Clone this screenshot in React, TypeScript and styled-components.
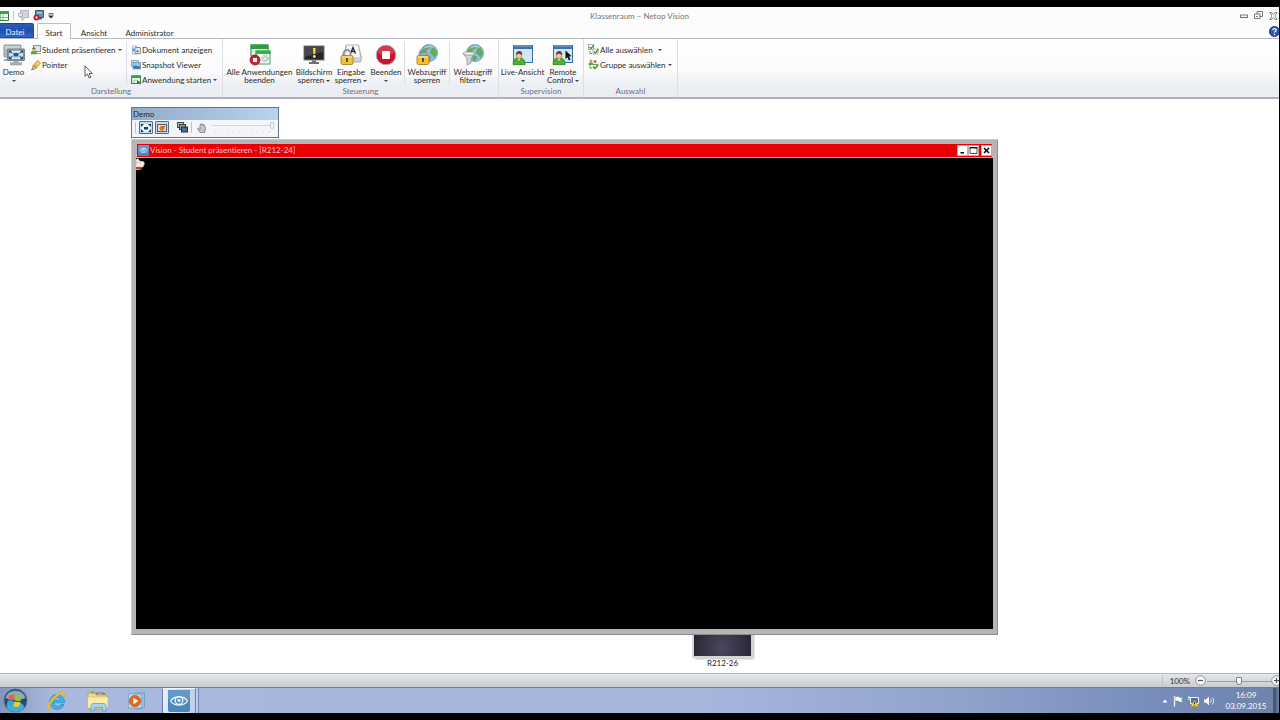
import React from "react";
import styled, { createGlobalStyle, css } from "styled-components";

const Global = createGlobalStyle`
  *, *::before, *::after { box-sizing: border-box; }
  body { margin: 0; background: #000; }
  body, button, input { font-family: Lato, "Open Sans", sans-serif; font-size: 8px; line-height: 8px; color: #2c2c2c; }
  button { margin: 0; padding: 0; border: 0; background: none; white-space: nowrap; }
  svg { display: block; flex: none; }
`;

const Screen = styled.main`
  display: flex;
  flex-direction: column;
  height: 100vh;
  padding: 7px 1px 7px 0;
  background: #000;
  overflow: hidden;
`;

/* ---------- title bar ---------- */

const TitleBar = styled.header`
  display: grid;
  grid-template-columns: 1fr auto 1fr;
  align-items: center;
  height: 17px;
  flex: none;
  background: #fcfcfc;
  overflow: hidden;
`;

const QuickAccess = styled.div`
  display: flex;
  align-items: center;
  gap: 4px;
`;

const Title = styled.h1`
  margin: 0;
  font-size: 8px;
  line-height: 10px;
  font-weight: 400;
  color: #777;
`;

const WindowControls = styled.div`
  display: flex;
  align-items: center;
  justify-self: end;
  gap: 6px;
  width: 39px;
`;

const Rule = styled.span<{ $h: number }>`
  flex: none;
  width: 1px;
  height: ${(p) => p.$h}px;
  background: #bfc2c8;
`;

/* ---------- ribbon ---------- */

const TabRow = styled.nav`
  display: flex;
  align-items: flex-end;
  height: 15px;
  flex: none;
  background: #fcfcfc;
  border-bottom: 1px solid #b4b9c2;
`;

const Tab = styled.button<{ $kind?: "file" | "active"; $w: number }>`
  width: ${(p) => p.$w}px;
  height: 15px;
  padding-top: 4px;
  ${(p) =>
    p.$kind === "file" &&
    css`
      margin-right: 3px;
      padding-top: 2px;
      padding-right: 3px;
      color: #e8f0ff;
      background: linear-gradient(#2a5db8, #1e4fae 50%, #2f6ad0);
      border: 1px solid #1c479c;
      border-left: 0;
      border-radius: 0 2px 0 0;
    `}
  ${(p) =>
    p.$kind === "active" &&
    css`
      height: 16px;
      margin-bottom: -1px;
      padding-top: 2px;
      background: #fff;
      border: 1px solid #b9bec8;
      border-bottom: 0;
      border-radius: 2px 2px 0 0;
    `}
`;

const HelpButton = styled.button`
  align-self: center;
  margin-left: auto;
  width: 10px;
  overflow: hidden;
`;

const Ribbon = styled.section`
  display: flex;
  height: 60px;
  flex: none;
  background: linear-gradient(#fff 0%, #fbfbfc 55%, #edf0f4 75%, #e9ecf1 100%);
  border-bottom: 2px solid #aeb2bb;
`;

const Group = styled.div<{ $w: number }>`
  flex: none;
  width: ${(p) => p.$w}px;
  border-right: 1px solid #dadde3;
`;

const GroupBody = styled.div`
  display: flex;
  height: 48px;
  padding-top: 3px;
`;

const GroupLabel = styled.div`
  text-align: center;
  color: #6c717a;
`;

const Column = styled.div<{ $w: number; $pad?: number }>`
  width: ${(p) => p.$w}px;
  padding-left: ${(p) => p.$pad ?? 0}px;
  flex: none;
`;

const RowButton = styled.button`
  display: flex;
  align-items: center;
  gap: 1px;
  height: 15px;
  padding-left: 2px;
`;

const BigButtonRoot = styled.button<{ $w: number }>`
  display: flex;
  flex-direction: column;
  align-items: center;
  flex: none;
  width: ${(p) => p.$w}px;
  padding-top: 2px;
`;

const BigLabel = styled.span`
  display: block;
  margin-top: 2px;
  text-align: center;
  white-space: pre-line;
`;

const Divider = styled.span`
  flex: none;
  width: 1px;
  height: 42px;
  margin: 0 2px;
  background: #d9dce2;
`;

const Caret = styled.span<{ $gap?: number }>`
  display: inline-block;
  margin-left: ${(p) => p.$gap ?? 2}px;
  vertical-align: middle;
  border: 2px solid transparent;
  border-top-color: #444;
  border-bottom: 0;
`;

/* ---------- classroom area ---------- */

const Workspace = styled.section`
  position: relative;
  flex: 1;
  min-height: 0;
  background: #fff;
`;

const Toolbox = styled.section`
  position: absolute;
  left: 131px;
  top: 8px;
  width: 148px;
  background: #f3f5f8;
  border: 1px solid #5f7590;
`;

const ToolboxTitle = styled.h2`
  margin: 0;
  padding: 0 1px;
  font-size: 8px;
  line-height: 12px;
  font-weight: 400;
  color: #1c2836;
  background: linear-gradient(90deg, #92abc9, #b9d2ee);
`;

const ToolboxRow = styled.div`
  display: flex;
  align-items: center;
  height: 17px;
  padding: 0 0 2px 3px;
  gap: 2px;
`;

const ToolButton = styled.button<{ $on?: boolean; $gap?: number }>`
  display: grid;
  place-items: center;
  width: 14px;
  height: 13px;
  margin-left: ${(p) => p.$gap ?? 0}px;
  border-radius: 1px;
  ${(p) =>
    p.$on &&
    css`
      background: #c5dcf5;
      border: 1px solid #4a6a92;
    `}
`;

const ToolSlider = styled.input`
  appearance: none;
  width: 62px;
  height: 12px;
  margin: 0 0 0 1px;
  background:
    repeating-linear-gradient(90deg, #cfd2d6 0 1px, transparent 1px 6px) 3px 9px / 56px 1px no-repeat,
    linear-gradient(#d4d6da, #d4d6da) 0 3px / 62px 1px no-repeat;
  &::-webkit-slider-thumb {
    appearance: none;
    width: 4px;
    height: 7px;
    margin-top: -4px;
    border: 1px solid #c3c6cb;
    border-radius: 1px 1px 2px 2px;
    background: #f6f7f9;
  }
`;

const StudentTile = styled.figure`
  position: absolute;
  left: 693px;
  bottom: 5px;
  width: 59px;
  margin: 0;
`;

const StudentScreen = styled.div`
  height: 42px;
  border: 1px solid #d2d3d6;
  outline: 1px solid #d8d8da;
  background: radial-gradient(ellipse at 50% 80%, #4a475e, #2b2938 70%, #191820);
  box-shadow: 2px 2px 2px #bbb;
`;

const StudentName = styled.figcaption`
  padding-top: 2px;
  text-align: center;
  line-height: 9px;
  color: #222;
`;

const RemoteWindow = styled.section`
  position: absolute;
  inset: 40px 281px 38px 131px;
  display: flex;
  flex-direction: column;
  padding: 3px 4px 5px 4px;
  background: #b5b5b5;
  border: 1px solid #8d8d8d;
  border-top-color: #c8c8c8;
  border-left-color: #c8c8c8;
`;

const RemoteTitle = styled.header`
  display: flex;
  align-items: center;
  gap: 1px;
  height: 15px;
  flex: none;
  padding: 0 0 1px 1px;
  border: 1px solid #c7b0b0;
  background: #e90005;
  color: #f5c9c9;
`;

const RemoteName = styled.h2`
  flex: 1;
  margin: 0;
  font-size: 8px;
  line-height: 9px;
  font-weight: 400;
`;

const ClassicButton = styled.button<{ $gap?: number }>`
  display: grid;
  place-items: center;
  width: 11px;
  height: 11px;
  margin-left: ${(p) => p.$gap ?? -1}px;
  background: #fff;
  border: 1px solid #c9a9ad;
`;

const RemoteScreen = styled.div`
  flex: 1;
  min-height: 0;
  background: #000;
`;

const Pointer = styled.svg`
  position: absolute;
  left: 84px;
  top: 65px;
`;

/* ---------- status bar and task bar ---------- */

const StatusBar = styled.footer`
  display: flex;
  align-items: center;
  justify-content: flex-end;
  flex: none;
  height: 15px;
  border-top: 1px solid #b5b8be;
  border-bottom: 1px solid #777d88;
  background: linear-gradient(#e6e7ea, #c9ccd2);
  overflow: hidden;
`;

const ZoomValue = styled.label`
  margin: 0 5px 0 7px;
`;

const RoundButton = styled.button`
  flex: none;
  width: 11px;
  height: 11px;
`;

const PlusClip = styled.div`
  width: 8px;
  flex: none;
  overflow: hidden;
`;

const ZoomSlider = styled.input`
  appearance: none;
  width: 64px;
  height: 10px;
  margin: 0 0 0 1px;
  background: linear-gradient(#999ea6, #999ea6) 0 5px / 100% 1px no-repeat;
  &::-webkit-slider-thumb {
    appearance: none;
    width: 6px;
    height: 8px;
    border: 1px solid #7a7f88;
    border-radius: 1px 1px 3px 3px;
    background: #fafafa;
  }
`;

const TaskBar = styled.footer`
  display: flex;
  align-items: center;
  flex: none;
  height: 25px;
  background: linear-gradient(90deg, #8594ba 0, #a9b8dc 4%, #a6b6dd 55%, #91a2cc 75%, #7288b5 94%, #7083a8 100%);
`;

const TaskButton = styled.button<{ $w: number; $active?: boolean }>`
  display: grid;
  place-items: center;
  flex: none;
  width: ${(p) => p.$w}px;
  height: 25px;
  ${(p) =>
    p.$active &&
    css`
      background: linear-gradient(100deg, #e6effa, #bccdea);
      border: 1px solid #6d7ea6;
      border-top-color: #edf3fc;
      border-bottom: 0;
      box-shadow: 2px 0 0 #bfcceb, 3px 0 0 #7585ae;
    `}
`;

const Tray = styled.div`
  display: flex;
  align-items: center;
  gap: 4px;
  margin-left: auto;
`;

const Clock = styled.time`
  width: 54px;
  line-height: 11px;
  text-align: center;
  color: #fff;
`;

const ShowDesktop = styled.button`
  width: 6px;
  height: 25px;
  margin-left: -4px;
  background: linear-gradient(90deg, #3e4d6e, #7585a5);
  border-left: 1px solid #4e5e80;
`;

/* ---------- icons ---------- */

const Svg = ({ s, w, h, vb, children }: { s?: number; w?: number; h?: number; vb: string; children: React.ReactNode }) => (
  <svg width={w ?? s} height={h ?? s} viewBox={vb} aria-hidden="true">
    {children}
  </svg>
);

const DemoIcon = () => (
  <Svg s={22} vb="0 0 22 22">
    <rect x="1" y="1" width="17" height="12" rx=".5" fill="#b3b9c0" stroke="#8d959e" />
    <path d="M2 2h15v3H2z" fill="#ccd1d6" />
    <path d="M1 15h6v2H1z" fill="#a4abb2" />
    <rect x="4.500" y="5" width="17" height="11.500" rx=".5" fill="#8c959f" stroke="#7a838d" />
    <rect x="6" y="6.500" width="14" height="8.500" fill="#c9dff0" />
    <rect x="10.500" y="9" width="5" height="3.500" fill="#1f5b92" />
    <path d="M6 6.500h3l-1 1 1.600 1.500-.7.700-1.600-1.600L6 9.500zM20 6.500h-3l1 1-1.600 1.500.7.700 1.600-1.600L20 9.500zM6 15h3l-1-1 1.600-1.500-.7-.7-1.600 1.600L6 12zM20 15h-3l1-1-1.600-1.500.7-.7 1.600 1.600L20 12z" fill="#1c456b" />
    <path d="M11 17h4v1.500h3.500V21h-11v-2.500H11z" fill="#a9b0b7" stroke="#8b939b" strokeWidth=".5" />
  </Svg>
);

const Person = ({ x = 0, y = 0, k = 1 }: { x?: number; y?: number; k?: number }) => (
  <g transform={`translate(${x} ${y}) scale(${k})`}>
    <path d="M0 13c0-4 1.500-5.500 3-6h5c2 .5 3.500 2 3.500 6z" fill="#4fae32" stroke="#2c7d1d" strokeWidth=".7" />
    <path d="M4 6.500h3.500L5.700 9.500z" fill="#e9f5df" />
    <ellipse cx="5.700" cy="4.200" rx="2.600" ry="3.200" fill="#efc79c" stroke="#8a5a34" strokeWidth=".5" />
    <path d="M2.800 4C2.600 1 4 0 6 0s3 1.500 2.700 3.800C7.500 3.500 6.500 2.500 5.500 2.500S3.500 3 2.800 4z" fill="#6f4523" />
  </g>
);

const StudentIcon = () => (
  <Svg s={10} vb="0 0 10 10">
    <rect x="2.500" y=".5" width="7" height="6" fill="#d8e5ef" stroke="#8296a6" />
    <Person y={2.5} k={0.5} />
    <path d="M6 8.500h4" stroke="#8b959c" />
  </Svg>
);

const PencilIcon = () => (
  <Svg s={10} vb="0 0 10 10">
    <path d="M6.500 .3L9.700 3 5.500 8 2 5.500z" fill="#f6bd2a" stroke="#a97a10" strokeWidth=".5" />
    <path d="M2 5.500L5.500 8 1.200 9.500z" fill="#e6c79a" stroke="#604519" strokeWidth=".5" />
    <path d="M5.300 2l3 2.500" stroke="#fdf0a8" />
    <path d="M0 9.500h3" stroke="#8d7c5b" />
  </Svg>
);

const DocumentIcon = () => (
  <Svg s={10} vb="0 0 10 10">
    <path d="M1.500 1h4l1.500 2v6H1.500z" fill="#f2f5f8" stroke="#91a0ad" strokeWidth=".7" />
    <path d="M4 2.500h5.500v6H4z" fill="#d9e7f3" stroke="#5b7f9f" strokeWidth=".8" />
    <path d="M5 7l1.500-2L8 7z" fill="#347f46" />
    <circle cx="2.500" cy="5" r="1.400" fill="#4b98ca" />
  </Svg>
);

const SnapshotIcon = () => (
  <Svg s={10} vb="0 0 10 10">
    <rect x=".5" y=".5" width="7" height="6" fill="#bfe0f5" stroke="#7293ab" strokeWidth=".7" />
    <rect x="2" y="2.500" width="7.500" height="6.500" fill="#8fcbef" stroke="#6c93b0" strokeWidth=".8" />
    <path d="M2.500 8.500v-2l2-1 2 1 1-.5 1.500.5v2z" fill="#2f6ea3" />
  </Svg>
);

const LaunchIcon = () => (
  <Svg s={10} vb="0 0 10 10">
    <rect x=".5" y="1" width="9" height="7.500" fill="#f3fbf3" stroke="#2d8a3f" />
    <path d="M0 .5h10V3H0z" fill="#31a347" />
    <path d="M1.500 7h3M1.500 5.300h4" stroke="#98cda1" />
    <path d="M6 5l3.500 2.200L6 9.500z" fill="#1d8a33" />
  </Svg>
);

const KillAppsIcon = () => (
  <Svg s={22} vb="0 0 22 22">
    <rect x="2" y="1" width="17" height="11" fill="#e3f2e3" stroke="#2c8c3c" />
    <path d="M1.500 .5h18V5h-18z" fill="#2f9e43" />
    <rect x="7" y="7" width="14" height="13" fill="#f5faf5" stroke="#4fa45b" />
    <path d="M6.500 6.500h15V10h-15z" fill="#3bab4f" />
    <circle cx="16" cy="14.500" r="3" fill="none" stroke="#b9c5bd" strokeWidth="1.800" strokeDasharray="1.500 .9" />
    <circle cx="16" cy="14.500" r="1.700" fill="none" stroke="#b9c5bd" />
    <circle cx="6" cy="16" r="5" fill="#cf1f33" stroke="#9c1022" strokeWidth=".8" />
    <rect x="4" y="14" width="4" height="4" fill="#fff" />
  </Svg>
);

const LockScreenIcon = () => (
  <Svg s={22} vb="0 0 22 22">
    <rect x="1" y="2" width="20" height="14" fill="#262626" stroke="#777b80" />
    <path d="M2 3h18v5L2 13z" fill="#474747" />
    <path d="M10 4h2.600l-.5 6h-1.600z" fill="#ffe14a" />
    <circle cx="11.300" cy="12.500" r="1.400" fill="#ffe14a" />
    <path d="M9 16.500h4v1.500h3v2H6v-2h3z" fill="#6b7075" />
  </Svg>
);

const Padlock = () => (
  <g>
    <path d="M3.500 12V9.500a3.500 3.500 0 0 1 7 0V12" fill="none" stroke="#8e939a" strokeWidth="1.800" />
    <rect x="1" y="11.500" width="12" height="9" rx="1.500" fill="#efc03c" stroke="#a57a15" strokeWidth=".8" />
    <path d="M2 13h10" stroke="#fbe69a" strokeWidth="1.200" />
    <path d="M7 14v4M6 15h1" stroke="#45320a" strokeWidth="1.500" />
  </g>
);

const LockInputIcon = () => (
  <Svg s={22} vb="0 0 22 22">
    <path d="M6 1h12.500l3 13-1 4H5L3.500 14z" fill="#cfd2d6" stroke="#9a9da2" strokeWidth=".8" />
    <path d="M7 1.500h11l1.800 11.500h-14z" fill="#f6f7f8" />
    <path d="M10.500 9.500l2.500-6 2.500 6M11.500 7.500h3" fill="none" stroke="#2c2c2c" strokeWidth="1.400" />
    <Padlock />
  </Svg>
);

const StopIcon = () => (
  <Svg s={22} vb="0 0 22 22">
    <circle cx="11" cy="11" r="9.800" fill="#c8152f" stroke="#b5abad" strokeWidth="1" />
    <path d="M2.500 9a8.600 8.600 0 0 1 17 0c-4 2.500-12 3-17 0z" fill="#d43a50" />
    <rect x="7" y="7" width="8" height="8" rx="1" fill="#fff" />
  </Svg>
);

const Globe = () => (
  <g>
    <circle cx="13" cy="9" r="8.500" fill="#8dbce0" stroke="#5e90b8" strokeWidth=".8" />
    <path d="M7 4c2-2.500 5-3 6-2.500l1 3-3 1-1 3-2 .5-3 1c0-3 1-5 2-6zM16 4l3 .5c1.500 2 2 4 1.500 6l-2 3-2.500-3-2-1 .5-3zM10 11l4 1 1 2-2 3h-2z" fill="#63ab55" />
    <path d="M7 5a8 8 0 0 1 9-3c-3 1-6 2-9 3z" fill="#d9eefb" opacity=".6" />
  </g>
);

const LockWebIcon = () => (
  <Svg s={22} vb="0 0 22 22">
    <Globe />
    <Padlock />
  </Svg>
);

const FilterWebIcon = () => (
  <Svg s={22} vb="0 0 22 22">
    <Globe />
    <path d="M1 9.500h12L9 14.500V19l-4 2v-6.500z" fill="#d4d7da" stroke="#888d93" strokeWidth=".8" />
    <ellipse cx="7" cy="9.500" rx="6" ry="1.600" fill="#f5f6f7" stroke="#888d93" strokeWidth=".8" />
  </Svg>
);

const ScreenIcon = ({ arrow }: { arrow?: boolean }) => (
  <Svg s={22} vb="0 0 22 22">
    <rect x="1.500" y="1.500" width="19" height="17" fill="#d3e6f7" stroke="#3a6ca8" />
    <path d="M1 1h20v4H1z" fill="#3a6fb4" />
    <path d="M2 2h18" stroke="#82aadb" />
    <Person x={1} y={7} k={1.05} />
    {arrow && <path d="M13.500 6.500v8.500l2-1.800 1.400 3.200 1.600-.8-1.400-3 2.600-.3z" fill="#111" />}
  </Svg>
);

const SelectAllIcon = () => (
  <Svg s={11} vb="0 0 11 11">
    <rect x=".5" y=".5" width="5" height="5" fill="#fff" stroke="#7c9b7c" strokeWidth=".7" />
    <path d="M1.500 3l1.500 1.500L6 1M6 7.500l1.500 1.500L10.500 5" fill="none" stroke="#3b9a2e" strokeWidth="1.300" />
    <rect x="5" y="5" width="5" height="5" fill="none" stroke="#7c9b7c" strokeWidth=".7" />
    <path d="M2 7v2.500h2" fill="none" stroke="#5b8f50" />
  </Svg>
);

const SelectGroupIcon = () => (
  <Svg s={11} vb="0 0 11 11">
    <circle cx="3" cy="2" r="1.500" fill="#c79b69" />
    <circle cx="7" cy="2.500" r="1.500" fill="#a97a4a" />
    <path d="M.5 6c0-2 1-2.500 2.500-2.500S5 4 5.500 5 9 3.500 9.500 6z" fill="#4fa339" />
    <path d="M2 6.500V9h2" fill="none" stroke="#5b8f50" />
    <path d="M5 7.500l2 2L10.500 5.500" fill="none" stroke="#358f28" strokeWidth="1.500" />
  </Svg>
);

const EyeMark = ({ size }: { size: number }) => (
  <Svg s={size} vb="0 0 22 22">
    <rect width="22" height="22" rx="2" fill="#4d87be" />
    <path d="M0 0h22v9C15 12 6 12 0 9z" fill="#6498ca" />
    <path d="M2.500 11C6 5.500 16 5.500 19.500 11 16 16.500 6 16.500 2.500 11z" fill="none" stroke="#e9f3fb" strokeWidth="1.300" />
    <circle cx="11" cy="10.500" r="3.800" fill="none" stroke="#e9f3fb" strokeWidth="1.300" />
    <circle cx="11" cy="10.500" r="1.500" fill="#e9f3fb" />
  </Svg>
);

const GridIcon = () => (
  <Svg w={9} h={10} vb="0 0 9 10">
    <path d="M0 .5h8.500v9H0z" fill="#fff" stroke="#27853b" />
    <path d="M0 0h9v3H0z" fill="#39a04f" />
    <path d="M0 6.500h8M3 3v6" stroke="#83bd8d" />
  </Svg>
);

const BubbleIcon = ({ stop }: { stop?: boolean }) => (
  <Svg s={11} vb="0 0 11 11">
    {stop ? (
      <>
        <path d="M2.500 .5h8v7h-8z" fill="#5f93c5" stroke="#42566d" />
        <path d="M4 2h5v1.500H4z" fill="#a9d299" />
        <path d="M6 8h3v1.500H6z" fill="#58616a" />
        <circle cx="3.500" cy="7.500" r="3" fill="#c3152c" />
        <path d="M2.500 6.500h2v2h-2z" fill="#fff" />
      </>
    ) : (
      <>
        <path d="M2.500 .5h8v7H7l-3 3v-3H2.500z" fill="#d0d4db" stroke="#a3a9b5" strokeWidth=".8" />
        <path d="M.5 3h4v3.500h-4z" fill="#e1e4e8" stroke="#a3a9b5" strokeWidth=".7" />
      </>
    )}
  </Svg>
);

const HelpIcon = () => (
  <Svg s={11} vb="0 0 11 11">
    <circle cx="5.500" cy="5.500" r="5" fill="#2b59a9" stroke="#16387a" />
    <path d="M3.800 4.200c0-2.300 3.600-2.200 3.400 0C7.100 5.200 5.500 5.300 5.500 6.500M5.500 7.700v1.200" fill="none" stroke="#fff" strokeWidth="1.200" />
  </Svg>
);

const CircleSign = ({ plus }: { plus?: boolean }) => (
  <Svg s={11} vb="0 0 11 11">
    <circle cx="5.500" cy="5.500" r="4.800" fill="#f7f7f8" stroke="#777c84" strokeWidth=".8" />
    <path d={plus ? "M3 5.500h5M5.500 3v5" : "M3 5.500h5"} stroke="#4c5158" strokeWidth="1.200" />
  </Svg>
);

const WindowsOrb = () => (
  <Svg s={25} vb="0 0 25 25">
    <circle cx="12.500" cy="12.500" r="11.500" fill="#1e4d78" stroke="#56718c" />
    <ellipse cx="12.500" cy="19" rx="8.500" ry="5" fill="#3eb0d0" />
    <path d="M2.500 10a10.500 10.500 0 0 1 20 0c-5 2-15 2-20 0z" fill="#93a9b9" />
    <path d="M6 7.500c2-1.300 4-1.300 6-.2l-1.200 5c-2-1-4-1-6 .1z" fill="#ef6530" />
    <path d="M13 7.700c2 1 4 1 6 0l-1.200 4.800c-2 1-4 1-6 0z" fill="#8dc63f" />
    <path d="M4.600 13.200c2-1.100 4-1.100 6-.1l-1.200 4.900c-2-1-4-1-6 .2z" fill="#3fa0e5" />
    <path d="M11.500 13.400c2 1 4 1 6 0L16.200 18c-2 1.200-4 1.200-6 .1z" fill="#fbc928" />
  </Svg>
);

const BrowserIcon = () => (
  <Svg s={22} vb="0 0 22 22">
    <path d="M18.500 12.800H7.600a4 4 0 0 0 7.300 1.700h3.200A7.500 7.500 0 1 1 18.500 12.800zM7.700 10h7a3.600 3.600 0 0 0-7 0z" fill="#3eb1e7" stroke="#2584bf" strokeWidth=".6" fillRule="evenodd" />
    <path d="M3 19.500C-1 21 2 12 8 6.500S20 0 19 4.500c0 .7-.3 1.300-.6 1.800C19 3 15 3 10 7.500S2.500 17.500 4.500 18.800z" fill="#f0c534" stroke="#c99c1b" strokeWidth=".4" />
  </Svg>
);

const FolderIcon = () => (
  <Svg w={24} h={22} vb="0 0 24 22">
    <path d="M2 3h7l1 2h11v14H2z" fill="#efd98a" stroke="#b59c4b" strokeWidth=".8" />
    <path d="M5 2.500h4M12 3h6" stroke="#7ca356" strokeWidth="1.400" />
    <path d="M10 3.500h2M17 4h2" stroke="#c25a3e" strokeWidth="1.500" />
    <path d="M1.500 7h20.500v11H1.500z" fill="#f8ecaa" stroke="#cdb766" strokeWidth=".6" />
    <path d="M5 21v-5c0-1.500 1-2.500 2.500-2.500h10c1.500 0 2.500 1 2.500 2.500v5h-3.500v-3.500h-8V21z" fill="#a4d4ee" stroke="#5798bf" strokeWidth=".7" />
  </Svg>
);

const PlayerIcon = () => (
  <Svg s={20} vb="0 0 20 20">
    <path d="M8 2h9.500v14l-4 2H8z" fill="#8fc1e3" stroke="#5f93ba" strokeWidth=".7" />
    <path d="M1.500 3h13v14h-13z" fill="#b9d9ee" stroke="#6d9dbd" strokeWidth=".7" />
    <circle cx="8" cy="10" r="5.600" fill="#e8651b" stroke="#b84a0d" strokeWidth=".6" />
    <path d="M6.300 6.800l5 3.200-5 3.200z" fill="#fff" />
  </Svg>
);

/* ---------- composed parts ---------- */

function BigButton({ w, icon, label, caret, below }: { w: number; icon: React.ReactNode; label: string; caret?: boolean; below?: boolean }) {
  return (
    <BigButtonRoot $w={w}>
      {icon}
      <BigLabel>
        {label}
        {below && <br />}
        {caret && <Caret $gap={below ? 0 : 2} />}
      </BigLabel>
    </BigButtonRoot>
  );
}

function SmallButton({ icon, label, caret }: { icon: React.ReactNode; label: string; caret?: number }) {
  return (
    <RowButton>
      {icon}
      <span>{label}</span>
      {caret !== undefined && <Caret $gap={caret} />}
    </RowButton>
  );
}

export default function App() {
  return (
    <Screen>
      <Global />
      <TitleBar>
        <QuickAccess>
          <button aria-label="Klassenraum"><GridIcon /></button>
          <Rule $h={9} />
          <button aria-label="Nachricht"><BubbleIcon /></button>
          <button aria-label="Demo beenden"><BubbleIcon stop /></button>
          <button aria-label="Anpassen">
            <Svg w={6} h={6} vb="0 0 6 6"><path d="M.5 .8h5" stroke="#333" /><path d="M0 2.500h6L3 5.500z" fill="#333" /></Svg>
          </button>
        </QuickAccess>
        <Title>Klassenraum – Netop Vision</Title>
        <WindowControls>
          <button aria-label="Minimieren">
            <Svg w={8} h={8} vb="0 0 8 8"><rect x=".5" y="3" width="7" height="2.500" fill="#fff" stroke="#777" /></Svg>
          </button>
          <button aria-label="Wiederherstellen">
            <Svg w={9} h={9} vb="0 0 9 9"><path d="M3 .5h5.500v5H3z" fill="#fff" stroke="#777" /><path d="M.5 3h5.500v4.500H.5z" fill="#fff" stroke="#777" /><path d="M2 5.500h2" stroke="#777" /></Svg>
          </button>
          <button aria-label="Schließen">
            <Svg w={9} h={8} vb="0 0 9 8"><path d="M1 .5h2L4.500 2.500 6 .5h2L6 4l2 3.500H6L4.500 5.500 3 7.500H1L3 4z" fill="#fff" stroke="#777" strokeWidth=".9" /></Svg>
          </button>
        </WindowControls>
      </TitleBar>

      <TabRow>
        <Tab $kind="file" $w={34}>Datei</Tab>
        <Tab $kind="active" $w={34}>Start</Tab>
        <Tab $w={46}>Ansicht</Tab>
        <Tab $w={65}>Administrator</Tab>
        <HelpButton aria-label="Hilfe"><HelpIcon /></HelpButton>
      </TabRow>

      <Ribbon>
        <Group $w={223}>
          <GroupBody>
            <BigButton w={27} icon={<DemoIcon />} label="Demo" caret below />
            <Column $w={97} $pad={2}>
              <SmallButton icon={<StudentIcon />} label="Student präsentieren" caret={1} />
              <SmallButton icon={<PencilIcon />} label="Pointer" />
            </Column>
            <Divider />
            <Column $w={92}>
              <SmallButton icon={<DocumentIcon />} label="Dokument anzeigen" />
              <SmallButton icon={<SnapshotIcon />} label="Snapshot Viewer" />
              <SmallButton icon={<LaunchIcon />} label="Anwendung starten" caret={1} />
            </Column>
          </GroupBody>
          <GroupLabel>Darstellung</GroupLabel>
        </Group>
        <Group $w={276}>
          <GroupBody>
            <BigButton w={73} icon={<KillAppsIcon />} label={"Alle Anwendungen\nbeenden"} />
            <BigButton w={36} icon={<LockScreenIcon />} label={"Bildschirm\nsperren"} caret />
            <BigButton w={38} icon={<LockInputIcon />} label={"Eingabe\nsperren"} caret />
            <BigButton w={32} icon={<StopIcon />} label="Beenden" caret below />
            <Divider />
            <BigButton w={40} icon={<LockWebIcon />} label={"Webzugriff\nsperren"} />
            <Divider />
            <BigButton w={42} icon={<FilterWebIcon />} label={"Webzugriff\nfiltern"} caret />
          </GroupBody>
          <GroupLabel>Steuerung</GroupLabel>
        </Group>
        <Group $w={85}>
          <GroupBody>
            <BigButton w={47} icon={<ScreenIcon />} label="Live-Ansicht" caret below />
            <BigButton w={34} icon={<ScreenIcon arrow />} label={"Remote\nControl"} caret />
          </GroupBody>
          <GroupLabel>Supervision</GroupLabel>
        </Group>
        <Group $w={94}>
          <GroupBody>
            <Column $w={92} $pad={2}>
              <SmallButton icon={<SelectAllIcon />} label="Alle auswählen" caret={4} />
              <SmallButton icon={<SelectGroupIcon />} label="Gruppe auswählen" caret={1} />
            </Column>
          </GroupBody>
          <GroupLabel>Auswahl</GroupLabel>
        </Group>
      </Ribbon>

      <Workspace>
        <StudentTile>
          <StudentScreen />
          <StudentName>R212-26</StudentName>
        </StudentTile>

        <Toolbox>
          <ToolboxTitle>Demo</ToolboxTitle>
          <ToolboxRow>
            <Rule $h={11} />
            <ToolButton $on $gap={1} aria-label="Vollbild">
              <Svg w={12} h={10} vb="0 0 12 10">
                <rect x="1" y="1" width="10" height="8" fill="#eef6fd" />
                <path d="M1 1h3L1 4zM11 1H8l3 3zM1 9h3L1 6zM11 9H8l3-3zM4 4h4v2.500H4z" fill="#163b66" />
              </Svg>
            </ToolButton>
            <ToolButton $on aria-label="Fenster">
              <Svg w={12} h={10} vb="0 0 12 10">
                <rect x="1.500" y="1.500" width="9" height="7" fill="#f1e2cc" stroke="#555f6a" />
                <circle cx="6" cy="5.300" r="2.500" fill="#e47a22" />
                <path d="M6 5l3-2" stroke="#a63b12" />
              </Svg>
            </ToolButton>
            <ToolButton $gap={4} aria-label="Monitore">
              <Svg s={11} vb="0 0 11 11">
                <rect x=".5" y=".5" width="6" height="5" fill="#b7c0b4" stroke="#444b4a" />
                <rect x="2.500" y="2.500" width="6" height="5" fill="#8bab8e" stroke="#333b3a" />
                <rect x="4.500" y="5" width="6" height="5" fill="#4b6f9b" stroke="#252e38" />
              </Svg>
            </ToolButton>
            <Rule $h={11} />
            <ToolButton $gap={1} aria-label="Hand">
              <Svg s={10} vb="0 0 10 10">
                <path d="M3 9.500L.8 6c-.5-1 .7-1.200 1.200-.5l1 1V2c0-1 1-1 1 0 0-1.500 1.200-1.500 1.200 0 .1-1.200 1.300-1.200 1.300.3.200-.9 1.200-.8 1.200.4L8.500 6 7.500 9.500z" fill="#c3c6ca" stroke="#777b82" strokeWidth=".8" />
              </Svg>
            </ToolButton>
            <ToolSlider type="range" aria-label="Geschwindigkeit" defaultValue={100} />
          </ToolboxRow>
        </Toolbox>

        <RemoteWindow>
          <RemoteTitle>
            <EyeMark size={11} />
            <RemoteName>Vision - Student präsentieren - [R212-24]</RemoteName>
            <ClassicButton aria-label="Minimieren">
              <Svg s={9} vb="0 0 9 9"><path d="M2.500 6.800H6" stroke="#000" strokeWidth="1.500" /></Svg>
            </ClassicButton>
            <ClassicButton aria-label="Maximieren">
              <Svg s={9} vb="0 0 9 9"><path d="M1 1.500v6h7v-6z" fill="none" stroke="#222" strokeWidth=".8" /><path d="M.7 1.800h7.600" stroke="#000" strokeWidth="1.200" /></Svg>
            </ClassicButton>
            <ClassicButton $gap={1} aria-label="Schließen">
              <Svg s={9} vb="0 0 9 9"><path d="M2 2l5 5M7 2L2 7" stroke="#000" strokeWidth="1.500" /></Svg>
            </ClassicButton>
          </RemoteTitle>
          <RemoteScreen>
            <Svg w={9} h={13} vb="0 0 9 13">
              <path d="M0 9V1.500L2 .5l1.500 2.500 4 .5 1 2L7 9z" fill="#f6f1e8" stroke="#d1b8a4" strokeWidth=".5" />
              <path d="M1 3v3M4 4v2" stroke="#b9a695" strokeWidth=".7" />
              <path d="M0 9h6.500L5 12H0z" fill="#c6401f" />
              <path d="M0 11.500h3" stroke="#f2a94a" />
            </Svg>
          </RemoteScreen>
        </RemoteWindow>
      </Workspace>

      <StatusBar>
        <Rule $h={11} />
        <ZoomValue htmlFor="zoom">100%</ZoomValue>
        <RoundButton aria-label="Verkleinern"><CircleSign /></RoundButton>
        <ZoomSlider id="zoom" type="range" defaultValue={50} />
        <PlusClip>
          <RoundButton aria-label="Vergrößern"><CircleSign plus /></RoundButton>
        </PlusClip>
      </StatusBar>

      <TaskBar>
        <TaskButton $w={30} aria-label="Start"><WindowsOrb /></TaskButton>
        <TaskButton $w={54} aria-label="Internet Explorer"><BrowserIcon /></TaskButton>
        <TaskButton $w={28} aria-label="Explorer"><FolderIcon /></TaskButton>
        <TaskButton $w={50} aria-label="Media Player"><PlayerIcon /></TaskButton>
        <TaskButton $w={34} $active aria-label="Netop Vision"><EyeMark size={22} /></TaskButton>
        <Tray>
          <button aria-label="Ausgeblendete Symbole">
            <Svg w={6} h={4} vb="0 0 6 4"><path d="M.5 3.500h5L3 .5z" fill="#fff" /></Svg>
          </button>
          <button aria-label="Wartungscenter">
            <Svg w={12} h={12} vb="0 0 12 12"><path d="M2.500 1v10.500" stroke="#f4f6fa" strokeWidth="1.300" /><path d="M3 1.500h4.500v1H11L9.500 4.500 11 7H6.500V6H3z" fill="#fff" stroke="#5b6780" strokeWidth=".4" /></Svg>
          </button>
          <button aria-label="Netzwerk">
            <Svg w={11} h={12} vb="0 0 11 12"><path d="M2.500 2.500h8v6h-8z" fill="#56719d" stroke="#eef2f8" /><path d="M1 1v4M0 2.500h2.500M4 10.500h5" stroke="#eef2f8" /><path d="M6.500 5l4.300 6.500H2.500z" fill="#f5d335" stroke="#ab861b" strokeWidth=".5" /><path d="M6.500 7v2.200M6.500 10v.8" stroke="#333" /></Svg>
          </button>
          <button aria-label="Lautstärke">
            <Svg w={12} h={12} vb="0 0 12 12"><path d="M1 4.500h2L6 1.500v9L3 7.500H1z" fill="#fff" /><path d="M7.500 4c1 1.200 1 2.800 0 4M9.300 2.500c1.900 2 1.900 5 0 7" fill="none" stroke="#e8edf6" strokeWidth=".9" /></Svg>
          </button>
          <Clock dateTime="2015-09-03T16:09">16:09<br />03.09.2015</Clock>
          <ShowDesktop aria-label="Desktop anzeigen" />
        </Tray>
      </TaskBar>

      <Pointer width="9" height="14" viewBox="0 0 9 14" aria-hidden="true">
        <path d="M1 .8v10.500l2.500-2.300 1.600 4 1.700-.7-1.600-3.800h3z" fill="#fff" stroke="#333" strokeWidth=".8" />
      </Pointer>
    </Screen>
  );
}
